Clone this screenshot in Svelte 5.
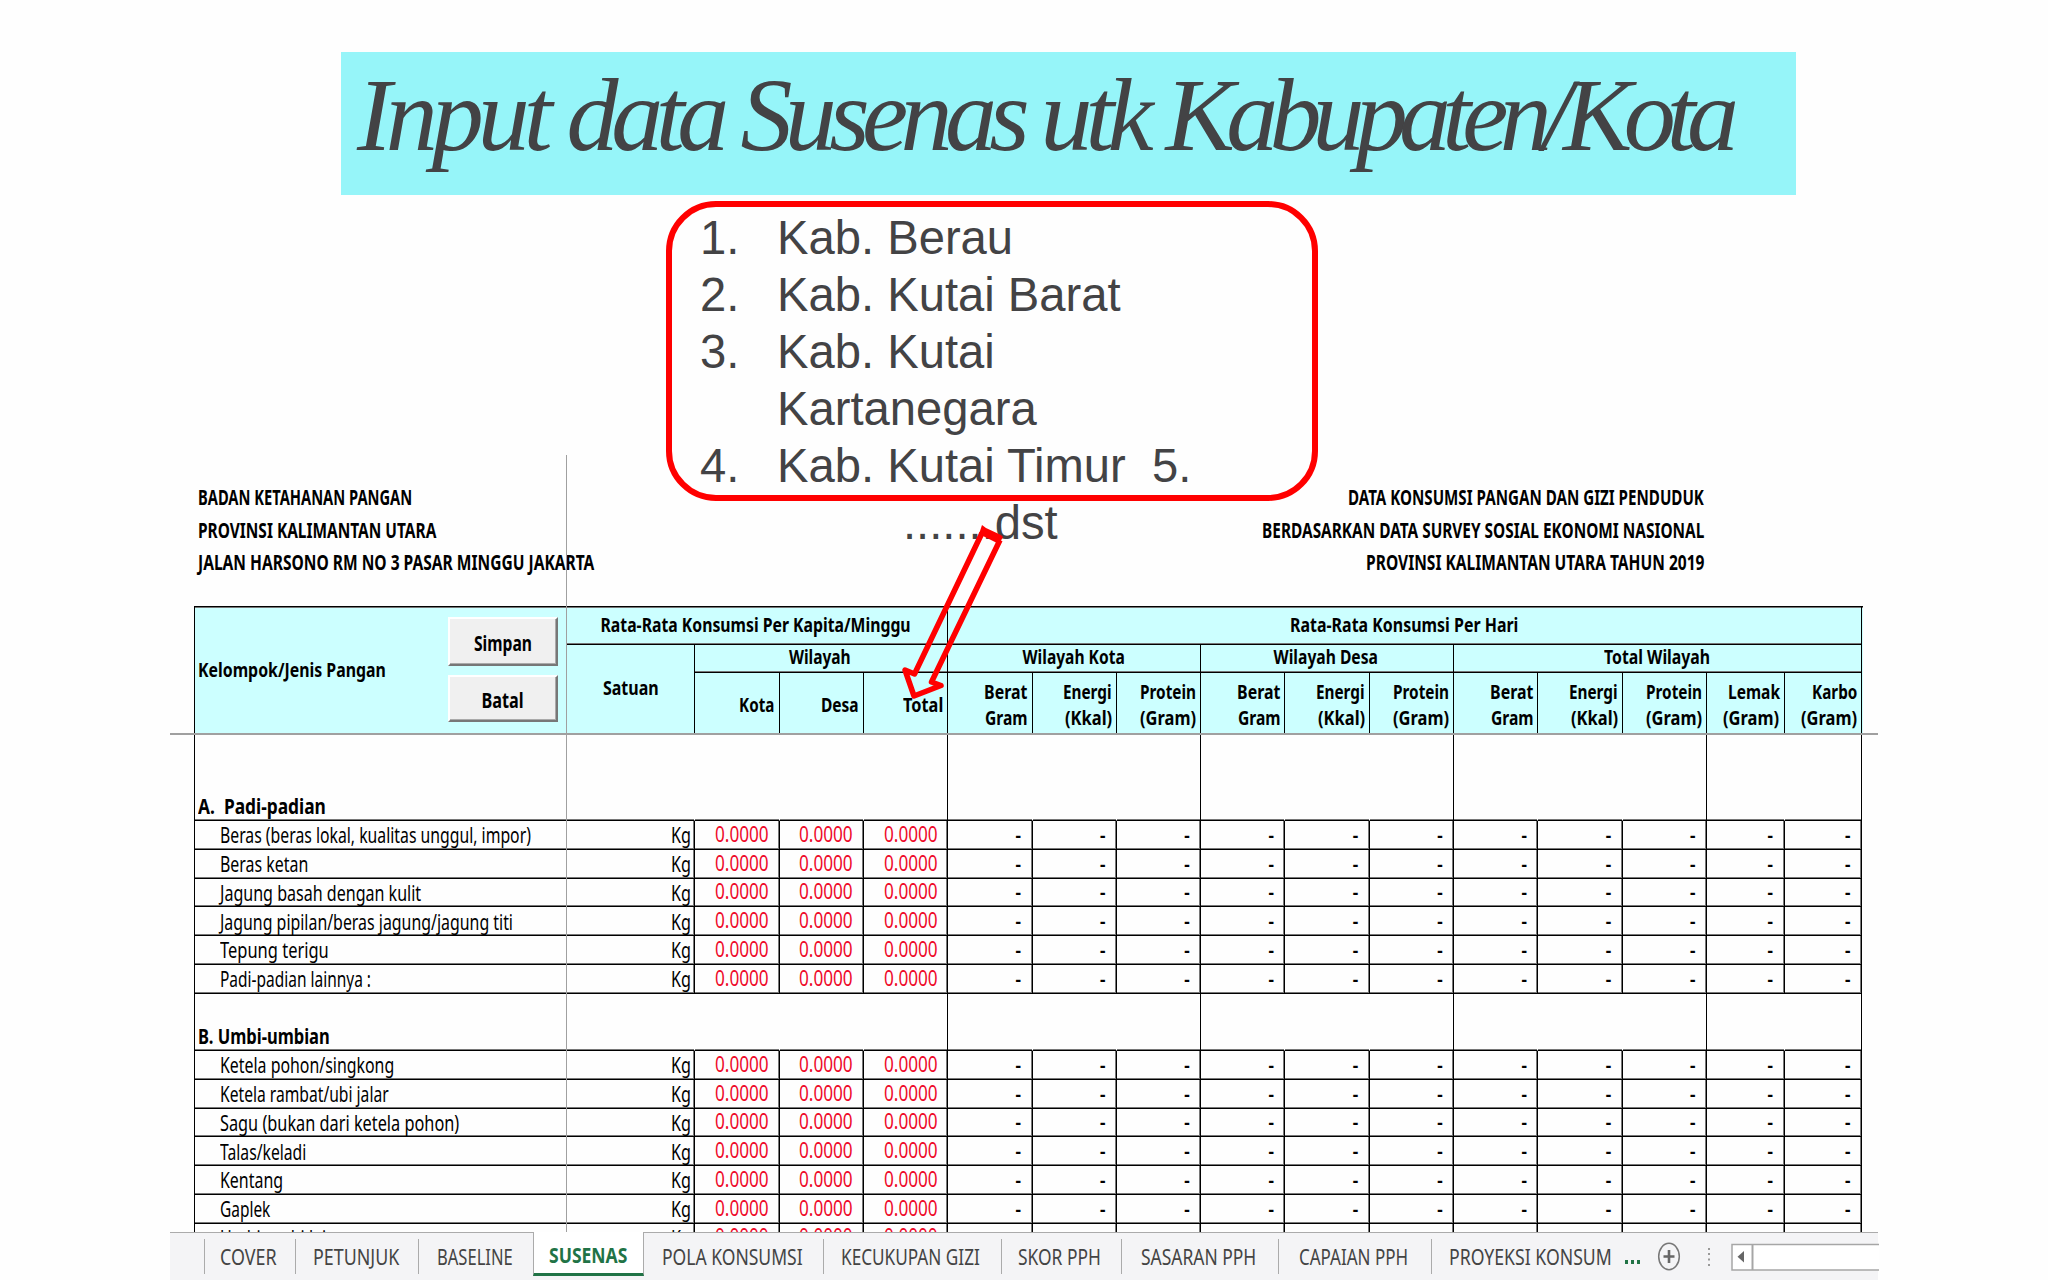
<script>
  const titleWords = [
    ['Input ', 210], ['data ', 174], ['Susenas ', 300], ['utk ', 125], ['Kabupaten/Kota', 565]
  ];
  const regions = ['Kab. Berau', 'Kab. Kutai Barat', 'Kab. Kutai Kartanegara'];

  const groups = [
    {
      name: 'A.  Padi-padian', w: 128, lead: true,
      items: [
        ['Beras (beras lokal, kualitas unggul, impor)', 311],
        ['Beras ketan', 88],
        ['Jagung basah dengan kulit', 201],
        ['Jagung pipilan/beras jagung/jagung titi', 293],
        ['Tepung terigu', 109],
        ['Padi-padian lainnya :', 151]
      ]
    },
    {
      name: 'B. Umbi-umbian', w: 132, lead: false,
      items: [
        ['Ketela pohon/singkong', 174],
        ['Ketela rambat/ubi jalar', 169],
        ['Sagu (bukan dari ketela pohon)', 239],
        ['Talas/keladi', 86],
        ['Kentang', 63],
        ['Gaplek', 50],
        ['Umbi-umbi lain', 116]
      ]
    }
  ];

  const berat = [['Berat', 43], ['Gram', 43]];
  const energi = [['Energi', 49], ['(Kkal)', 47]];
  const protein = [['Protein', 56], ['(Gram)', 56]];
  const measures = [
    [['Kota', 35]], [['Desa', 38]], [['Total', 40]],
    berat, energi, protein, berat, energi, protein, berat, energi, protein,
    [['Lemak', 52], ['(Gram)', 56]], [['Karbo', 45], ['(Gram)', 56]]
  ];

  // Column indexes that close a block of columns
  const blockEnd = [2, 5, 8, 11, 13];
  const cols = Array.from({ length: 14 }, (_, i) => i);

  const tabs = [
    { label: 'COVER', w: 91, pad: 16, tw: 57 },
    { label: 'PETUNJUK', w: 123, pad: 18, tw: 86 },
    { label: 'BASELINE', w: 115, pad: 19, tw: 76 },
    { label: 'SUSENAS', w: 111, pad: 15, tw: 78, active: true },
    { label: 'POLA KONSUMSI', w: 179, pad: 18, tw: 141 },
    { label: 'KECUKUPAN GIZI', w: 178, pad: 18, tw: 139 },
    { label: 'SKOR PPH', w: 120, pad: 17, tw: 83 },
    { label: 'SASARAN PPH', w: 157, pad: 20, tw: 115 },
    { label: 'CAPAIAN PPH', w: 153, pad: 21, tw: 109 },
    { label: 'PROYEKSI KONSUM', w: 190, pad: 18, tw: 163 }
  ];

  // Condenses a line of text horizontally to the given width
  function fit(node, width) {
    const apply = () => {
      node.style.transform = `scaleX(${width / node.offsetWidth})`;
    };
    apply();
    document.fonts.ready.then(apply);
  }

  // Tightens the tracking until a word has the given width
  function track(node, width) {
    const n = node.textContent.length;
    node.style.letterSpacing = `${(width - node.offsetWidth) / n}px`;
  }
</script>

<main class="slide">
  <h1 class="title">
    {#each titleWords as [word, w]}<span use:track={w}>{word}</span>{/each}
  </h1>

  <section class="sheet">
    <header class="doc-head">
      <div class="org">
        <span use:fit={214}>BADAN KETAHANAN PANGAN</span>
        <span use:fit={238}>PROVINSI KALIMANTAN UTARA</span>
        <span use:fit={396}>JALAN HARSONO RM NO 3 PASAR MINGGU JAKARTA</span>
      </div>
      <div class="subject">
        <span use:fit={356}>DATA KONSUMSI PANGAN DAN GIZI PENDUDUK</span>
        <span use:fit={442}>BERDASARKAN DATA SURVEY SOSIAL EKONOMI NASIONAL</span>
        <span use:fit={338}>PROVINSI KALIMANTAN UTARA TAHUN 2019</span>
      </div>
    </header>

    <div class="viewport">
      <div class="grid head">
        <div class="c kind">
          <span class="l" use:fit={188}>Kelompok/Jenis Pangan</span>
          <div class="buttons">
            <button class="save"><span use:fit={58}>Simpan</span></button>
            <button><span use:fit={42}>Batal</span></button>
          </div>
        </div>
        <div class="c mid week line"><span use:fit={310}>Rata-Rata Konsumsi Per Kapita/Minggu</span></div>
        <div class="c mid day line"><span use:fit={228}>Rata-Rata Konsumsi Per Hari</span></div>
        <div class="c mid unit"><span use:fit={56}>Satuan</span></div>
        <div class="c mid area line"><span use:fit={62}>Wilayah</span></div>
        <div class="c mid area line"><span use:fit={102}>Wilayah Kota</span></div>
        <div class="c mid area line"><span use:fit={104}>Wilayah Desa</span></div>
        <div class="c mid area wide line"><span use:fit={106}>Total Wilayah</span></div>
        {#each measures as lines}
          <div class="c measure">
            {#each lines as [t, w]}<span use:fit={w}>{t}</span>{/each}
          </div>
        {/each}
      </div>

      {#each groups as g}
        <div class="grid section" class:lead={g.lead}>
          <div class="c name bare line"><span class="l" use:fit={g.w}>{g.name}</span></div>
          <div class="c bare line"></div>
          {#each cols as i}
            <div class="c line" class:bare={!blockEnd.includes(i)}></div>
          {/each}
        </div>
        {#each g.items as [name, w]}
          <div class="grid row">
            <div class="c item bare line"><span class="l" use:fit={w}>{name}</span></div>
            <div class="c kg line"><span use:fit={20}>Kg</span></div>
            {#each cols as i}
              {#if i < 3}
                <div class="c num line"><span use:fit={54}>0.0000</span></div>
              {:else}
                <div class="c dash line"><span>-</span></div>
              {/if}
            {/each}
          </div>
        {/each}
      {/each}
    </div>

    <nav class="tabs">
      {#each tabs as t}
        <div class="tab" class:active={t.active} style="width:{t.w}px;padding-left:{t.pad}px">
          <span class="l" use:fit={t.tw}>{t.label}</span>
        </div>
      {/each}
      <svg class="tools" viewBox="0 0 258 48" width="258" height="48">
        <g fill="#217346"><rect x="4" y="27" width="3" height="4" /><rect x="10" y="27" width="3" height="4" /><rect x="16" y="27" width="3" height="4" /></g>
        <ellipse cx="48" cy="23.5" rx="10.3" ry="13.2" fill="none" stroke="#777" stroke-width="1.5" />
        <path d="M48 17v13M42.500 23.500h11" stroke="#666" stroke-width="2.6" />
        <g fill="#999"><rect x="87" y="15" width="2" height="2" /><rect x="87" y="20" width="2" height="2" /><rect x="87" y="25.500" width="2" height="2" /><rect x="87" y="31" width="2" height="2" /></g>
        <rect x="111" y="11.500" width="160" height="25.500" fill="#fff" stroke="#a6a6a6" stroke-width="1.5" />
        <path d="M131.500 12v25" stroke="#a6a6a6" stroke-width="2" />
        <path d="M123 18v11.500l-6.500-5.700z" fill="#666" />
      </svg>
    </nav>
    <i class="freeze-v"></i>
    <i class="freeze-h"></i>
  </section>

  <aside class="callout">
    <ol>
      {#each regions as r}<li>{r}</li>{/each}
      <li class="long">Kab. Kutai Timur&nbsp; 5.</li>
    </ol>
    <p>.......dst</p>
  </aside>

  <svg class="arrow" viewBox="895 515 120 190" width="120" height="190">
    <path d="M982 533 914.500 674 905 670 914 696 941 685.500 931.500 682 1000 540" fill="none" stroke="#f00" stroke-width="5.500" stroke-linejoin="round" />
    <path d="M982 525 986 528 1001 535 1003 537 999 544 979 534Z" fill="#f00" />
  </svg>
</main>

<style>
  :global(body) { background: #fefefe; }
  * { box-sizing: border-box; }
  .slide {
    position: relative;
    width: 2048px;
    height: 1280px;
    overflow: hidden;
    display: flex;
    flex-direction: column;
    padding-top: 52px;
    background: #fefefe;
    font-family: "Noto Sans", sans-serif;
    color: #000;
  }
  span { white-space: pre; flex: none; }
  .l { transform-origin: left; }
  .title {
    width: 1455px;
    height: 143px;
    margin: 0 0 260px 341px;
    padding-left: 16px;
    display: flex;
    background: #96f5f9;
    font: italic 400 104px/125px "Liberation Serif", serif;
    color: #434345;
  }
  .sheet {
    position: relative;
    width: 1708px;
    height: 825px;
    margin-left: 170px;
    display: flex;
    flex-direction: column;
  }
  .doc-head {
    height: 151px;
    padding: 26px 174px 0 28px;
    display: flex;
    justify-content: space-between;
    font-size: 20.5px;
    font-weight: 700;
    line-height: 32.5px;
  }
  .org, .subject { display: flex; flex-direction: column; align-items: flex-start; }
  .org span { transform-origin: left; }
  .subject { align-items: flex-end; }
  .subject span { transform-origin: right; }
  .viewport { height: 626px; margin-left: 24px; width: 1669px; overflow: hidden; border-left: 1px solid #000; }
  .grid {
    display: grid;
    grid-template-columns: 371.5px 128.8px repeat(12, 84.32px) 77.5px 77.5px;
  }
  .c {
    display: flex;
    align-items: center;
    min-width: 0;
    min-height: 0;
    border-right: 1px solid #000;
  }
  .line { border-bottom: 1px solid #000; box-shadow: inset 0 -1px #777; }
  .bare { border-right-color: transparent; }
  .head {
    height: 128px;
    grid-template-rows: 37.5px 28.7px 60.8px;
    border-top: 1px solid #000;
    box-shadow: inset 0 1px #777;
    background: #ccffff;
    font-size: 20px;
    font-weight: 700;
  }
  .mid { justify-content: center; padding-bottom: 1px; }
  .kind { grid-row: span 3; border-right: 0; padding: 0 8.5px 1px 3px; justify-content: space-between; }
  .buttons { display: flex; flex-direction: column; gap: 9px; }
  button {
    width: 110px;
    height: 47px;
    padding: 2px 0 0;
    display: flex;
    align-items: center;
    justify-content: center;
    background: #f0f0f0;
    border: 2px solid;
    border-color: #fff #777 #777 #fff;
    box-shadow: inset -1px -1px #aaa;
    font: 700 20.5px "Noto Sans", sans-serif;
    color: #000;
  }
  .save { height: 49px; }
  .week { grid-column: span 4; padding-right: 2px; }
  .day { grid-column: span 11; }
  .unit { grid-row: span 2; padding: 0 0 3px; }
  .area { grid-column: span 3; padding: 0 2px 3px 0; }
  .wide { grid-column: span 5; }
  .measure {
    flex-direction: column;
    justify-content: center;
    align-items: flex-end;
    padding: 2px 4px 0 0;
    line-height: 25.4px;
  }
  .measure span, .kg span, .num span { transform-origin: right; }
  .section { height: 57.5px; font-size: 21px; font-weight: 700; }
  .section.lead { height: 87px; }
  .name { align-items: flex-end; padding: 0 0 0 3px; line-height: 28px; }
  .row { height: 28.76px; font-size: 21px; line-height: 24px; }
  .row .line:not(.bare) { box-shadow: inset -1px -1px #777; }
  .item { padding: 1px 0 0 25px; }
  .kg, .num, .dash { justify-content: flex-end; padding: 1px 3px 0 0; }
  .num { padding: 0 10px 2px 0; color: #ee0a2a; }
  .dash { padding: 2px 10.5px 0 0; font-weight: 700; font-size: 17px; }
  .tabs {
    height: 48px;
    padding-left: 34px;
    display: flex;
    background: #f4f4f6;
    border-top: 1px solid #ababab;
    font-size: 22px;
    color: #444;
  }
  .tab {
    position: relative;
    flex: none;
    display: flex;
    align-items: center;
    height: 45px;
  }
  .tab::before {
    content: "";
    position: absolute;
    left: 0;
    top: 6px;
    width: 1px;
    height: 35px;
    background: #ababab;
  }
  .active {
    height: 44px;
    margin-top: -1px;
    padding-top: 3px;
    background: #fff;
    border: 1px solid #ababab;
    border-top: 0;
    border-bottom: 3px solid #217346;
    color: #217346;
    font-weight: 700;
  }
  .active::before, .active + .tab::before { display: none; }
  .tools { flex: none; }
  .freeze-v, .freeze-h { position: absolute; background: #a0a0a0; }
  .freeze-v { left: 396px; top: 0; width: 1px; height: 777px; }
  .freeze-h { left: 0; top: 278px; width: 1708px; height: 2px; }
  .callout {
    position: absolute;
    left: 666px;
    top: 201px;
    width: 652px;
    height: 300px;
    padding: 2px 0 0 28px;
    border: 6px solid #f00;
    border-radius: 50px;
    font: 47.2px/57px "Liberation Sans", Arial, sans-serif;
    color: #434345;
  }
  ol { margin: 0; padding: 0; list-style: none; counter-reset: n; }
  li { display: flex; counter-increment: n; width: 435px; }
  li::before { content: counter(n) "."; width: 77px; flex: none; }
  .long { width: auto; white-space: nowrap; }
  p { margin: 0; padding-left: 203px; }
  .arrow { position: absolute; left: 895px; top: 515px; }
</style>
